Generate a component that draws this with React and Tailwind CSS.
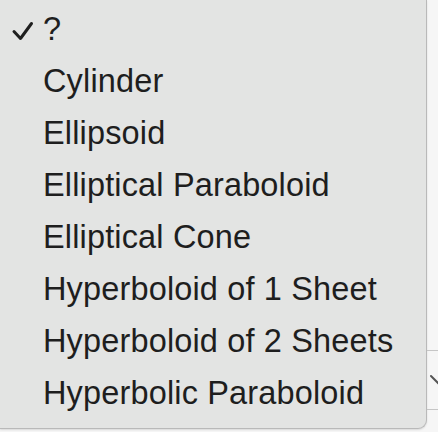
import React from 'react'

const options = [
    'Cylinder',
    'Ellipsoid',
    'Elliptical Paraboloid',
    'Elliptical Cone',
    'Hyperboloid of 1 Sheet',
    'Hyperboloid of 2 Sheets',
    'Hyperbolic Paraboloid',
]

const Check = () => (
    <svg width="24" height="22" viewBox="0 0 24 22" className="absolute left-[11px] top-[17px]">
        <path d="M3 11.5 L9.5 18.5 L20.5 3.5" fill="none" stroke="#1f1f1f" strokeWidth="3" strokeLinecap="round" strokeLinejoin="round" />
    </svg>
)

const Row = ({ label, checked }) => (
    <div className="relative h-[52px] pl-[43px] leading-[52px] whitespace-nowrap tracking-[0.15px]">
        {checked && <Check />}
        {label}
    </div>
)

const App = () => {
    return (
        <div className="w-[438px] h-[432px] overflow-hidden bg-[#f6f6f6] flex" style={{ fontFamily: '"Liberation Sans", Arial, sans-serif' }}>
            <div className="w-[427px] h-[429px] shrink-0 bg-[#e3e4e3] border-r border-b border-[#b9b9b9] rounded-br-[9px] pt-[3px] text-[32.5px] text-[#1e1e1e] shadow-[0_1px_2px_rgba(0,0,0,0.12)]">
                <Row label="?" checked />
                {options.map((o) => (
                    <Row key={o} label={o} />
                ))}
            </div>
            <div className="flex-1 relative">
                <div className="absolute left-0 right-0 top-[350px] h-[1px] bg-[#c6c6c6]" />
                <div className="absolute left-0 right-0 top-[409px] h-[1px] bg-[#c6c6c6]" />
                <svg width="12" height="14" viewBox="0 0 12 14" className="absolute left-[2px] top-[373px]">
                    <path d="M2 3 L10 11" stroke="#555" strokeWidth="2" strokeLinecap="round" />
                </svg>
            </div>
        </div>
    )
}

export default App
